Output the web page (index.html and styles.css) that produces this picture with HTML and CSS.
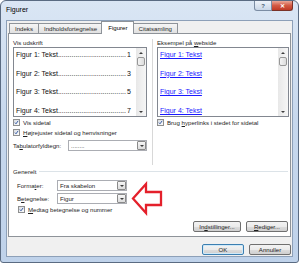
FILE: index.html
```html
<!DOCTYPE html>
<html lang="da">
<head>
  <meta charset="UTF-8" />
  <title>Figurer</title>
  <link rel="stylesheet" href="styles.css">
</head>
<body>
  <div class="window">
    <div class="titlebar">
      <span class="title">Figurer</span>
      <div class="caption">
        <span class="cap help">?</span>
        <span class="cap close">✕</span>
      </div>
    </div>

    <div class="client">
      <div class="tabs">
        <span class="tab">Indeks</span>
        <span class="tab">Indholdsfortegnelse</span>
        <span class="tab active">Figurer</span>
        <span class="tab">Citatsamling</span>
      </div>

      <div class="panel">
        <div class="top">
          <div class="col">
            <div class="label">Vis udskrift</div>
            <div class="listbox">
              <div class="entries">
                <div class="entry"><span>Figur 1: Tekst</span><span class="dots"></span><span class="num">1</span></div>
                <div class="entry"><span>Figur 2: Tekst</span><span class="dots"></span><span class="num">3</span></div>
                <div class="entry"><span>Figur 3: Tekst</span><span class="dots"></span><span class="num">5</span></div>
                <div class="entry"><span>Figur 4: Tekst</span><span class="dots"></span><span class="num">7</span></div>
              </div>
              <div class="scrollbar">
                <span class="sb-btn"><i class="up"></i></span>
                <span class="thumb"></span>
                <span class="sb-track"></span>
                <span class="sb-btn"><i class="down"></i></span>
              </div>
            </div>
            <div class="check"><span class="box"><svg viewBox="0 0 7 7"><path d="M1.3 3.6 L2.8 5.3 L5.8 1.2" /></svg></span>Vis sidetal</div>
            <div class="check"><span class="box"><svg viewBox="0 0 7 7"><path d="M1.3 3.6 L2.8 5.3 L5.8 1.2" /></svg></span><span><u>H</u>øjrejuster sidetal og henvisninger</span></div>
            <div class="field">
              <span class="field-label">Ta<u>b</u>ulatorfyldtegn:</span>
              <div class="combo wide">........<span class="drop"><i class="down"></i></span></div>
            </div>
          </div>

          <div class="col right">
            <div class="label">Eksempel på <u>w</u>ebside</div>
            <div class="listbox">
              <div class="entries">
                <div class="entry link">Figur 1: Tekst</div>
                <div class="entry link">Figur 2: Tekst</div>
                <div class="entry link">Figur 3: Tekst</div>
                <div class="entry link">Figur 4: Tekst</div>
              </div>
              <div class="scrollbar">
                <span class="sb-btn"><i class="up"></i></span>
                <span class="thumb"></span>
                <span class="sb-track"></span>
                <span class="sb-btn"><i class="down"></i></span>
              </div>
            </div>
            <div class="check"><span class="box"><svg viewBox="0 0 7 7"><path d="M1.3 3.6 L2.8 5.3 L5.8 1.2" /></svg></span><span>Brug <u>h</u>yperlinks i stedet for sidetal</span></div>
          </div>
        </div>

        <div class="group">Generelt</div>
        <div class="row">
          <span class="row-label">Forma<u>t</u>er:</span>
          <div class="combo">Fra skabelon<span class="drop"><i class="down"></i></span></div>
        </div>
        <div class="row">
          <span class="row-label">B<u>e</u>tegnelse:</span>
          <div class="combo">Figur<span class="drop"><i class="down"></i></span></div>
        </div>
        <div class="check indent"><span class="box"><svg viewBox="0 0 7 7"><path d="M1.3 3.6 L2.8 5.3 L5.8 1.2" /></svg></span><span><u>M</u>edtag betegnelse og nummer</span></div>

        <div class="buttons">
          <button class="btn wide">In<u>d</u>stillinger...</button>
          <button class="btn"><u>R</u>ediger...</button>
        </div>

        <svg class="arrow" viewBox="0 0 34 35" width="34" height="35">
          <polygon points="3,17.5 16,3 16,11 31,11 31,24 16,24 16,32" />
        </svg>
      </div>

      <div class="footer">
        <button class="btn default">OK</button>
        <button class="btn">Annuller</button>
      </div>
    </div>
  </div>
</body>
</html>
```

FILE: styles.css
```css
* { box-sizing: border-box; }
body {
  margin: 0;
  background: #fff;
  font-family: "Liberation Sans", Arial, sans-serif;
  font-size: 6.1px;
  color: #1e1e1e;
}
u { text-decoration-thickness: 0.5px; text-underline-offset: 1px; }

/* window frame */
.window {
  width: 299px;
  height: 263px;
  border: 1px solid #5a6b82;
  border-radius: 6px 6px 3px 3px;
  background: linear-gradient(180deg, #dae6f4 0%, #c7d8ed 45%, #bfd2ea 100%);
  padding: 0 5px 5px 5px;
  display: flex;
  flex-direction: column;
}
.titlebar {
  height: 19px;
  display: flex;
  align-items: flex-start;
}
.title {
  font-size: 7px;
  line-height: 17px;
  color: #000;
}
.caption { margin-left: auto; display: flex; }
.cap {
  height: 10px;
  display: flex;
  align-items: center;
  justify-content: center;
  border: 1px solid #7b8ca3;
  border-top: none;
  font-weight: bold;
  font-size: 6px;
}
.help {
  width: 18px;
  border-radius: 0 0 0 3px;
  background: linear-gradient(#eef3fa, #c9d6e7);
  color: #4a5a73;
}
.close {
  width: 21px;
  border-left: none;
  border-color: #7a3228;
  border-radius: 0 0 3px 0;
  background: linear-gradient(#eaa797, #d35a44 50%, #c03a25);
  color: #fff;
}

.client {
  flex: 1;
  background: #f0f0f0;
  border: 1px solid #8da0b8;
  padding: 0 1px 0 1px;
  display: flex;
  flex-direction: column;
}

/* tabs */
.tabs {
  height: 12px;
  display: flex;
  align-items: flex-end;
  padding-left: 1px;
}
.tab {
  height: 10px;
  line-height: 9px;
  padding: 0 5px;
  margin-left: -1px;
  border: 1px solid #8e9399;
  border-bottom: none;
  background: linear-gradient(#f5f5f5, #e1e1e1);
  color: #2a2a2a;
}
.tab:first-child { margin-left: 0; }
.tab.active {
  height: 13px;
  line-height: 11px;
  margin: 0 -1px -1px -2px;
  padding: 0 6px;
  background: #fff;
  position: relative;
  z-index: 1;
  color: #000;
}

/* panel */
.panel {
  position: relative;
  background: #fff;
  border: 1px solid #8e9399;
  padding: 5px 1px 4px 4px;
}
.top {
  display: grid;
  grid-template-columns: 134px 1fr;
  column-gap: 5px;
}
.col { padding-bottom: 14px; }
.col.right {
  border-left: 1px solid #d8d8d8;
  padding-left: 4px;
}
.label { line-height: 8px; }

.listbox {
  height: 70px;
  border: 1px solid #828790;
  background: #fff;
  display: flex;
  overflow: hidden;
}
.entries {
  flex: 1;
  padding: 3px 5px 0 2px;
  min-width: 0;
}
.entry {
  display: flex;
  height: 18.7px;
  font-size: 7px;
  line-height: 8px;
  color: #111;
  white-space: nowrap;
}
.entry.link {
  color: #1a1aff;
  text-decoration: underline;
  text-decoration-thickness: 0.6px;
}
.dots {
  flex: 1;
  overflow: hidden;
}
.dots::after { content: "................................................................"; }
.num { margin-left: 1px; }

.scrollbar {
  width: 10px;
  display: flex;
  flex-direction: column;
  align-items: center;
  background: linear-gradient(90deg, #e8e8e8, #f6f6f6);
}
.sb-btn {
  height: 9px;
  display: flex;
  align-items: center;
  justify-content: center;
}
.sb-track { flex: 1; }
.thumb {
  width: 8px;
  height: 9px;
  border: 1px solid #979797;
  border-radius: 2px;
  background: linear-gradient(90deg, #f4f4f4, #dcdcdc);
}
.up, .down {
  display: block;
  border-left: 2px solid transparent;
  border-right: 2px solid transparent;
}
.up { border-bottom: 2px solid #3c3c3c; }
.down { border-top: 2px solid #3c3c3c; }

/* checkboxes */
.check {
  display: flex;
  align-items: center;
  gap: 3px;
  height: 10px;
  white-space: nowrap;
}
.check.indent { padding-left: 5px; }
.box {
  width: 7px;
  height: 7px;
  border: 1px solid #8e8f8f;
  background: linear-gradient(135deg, #d9dce0, #fdfdfd);
  display: flex;
}
.box svg { width: 5px; height: 5px; }
.box path {
  fill: none;
  stroke: #2b52a0;
  stroke-width: 1.3;
}

/* combos */
.field {
  display: flex;
  align-items: center;
  margin-top: 3px;
}
.field-label { width: 55px; }
.combo {
  width: 70px;
  height: 11px;
  border: 1px solid #abadb3;
  background: #fff;
  display: flex;
  align-items: center;
  padding-left: 2px;
  white-space: nowrap;
}
.combo.wide { width: 79px; }
.drop {
  margin-left: auto;
  width: 9px;
  height: 9px;
  border: 1px solid #8a8a8a;
  border-radius: 1px;
  background: linear-gradient(#f6f6f6, #dcdcdc);
  display: flex;
  align-items: center;
  justify-content: center;
}

.group {
  display: flex;
  align-items: center;
  height: 12px;
}
.group::after {
  content: "";
  flex: 1;
  border-top: 1px solid #dce3e8;
  margin: 0 1px 0 3px;
}
.row {
  display: flex;
  align-items: center;
  padding-left: 4px;
  margin-top: 3px;
}
.row + .row { margin-top: 2px; }
.row-label { width: 40px; }

/* buttons */
.buttons, .footer {
  display: flex;
  justify-content: flex-end;
  gap: 5px;
}
.buttons { margin-top: 7px; padding-right: 1px; }
.footer { margin-top: 7px; }
.btn {
  width: 42px;
  height: 11px;
  padding: 0;
  font: inherit;
  color: #1e1e1e;
  border: 1px solid #707070;
  border-radius: 2px;
  background: linear-gradient(#f3f3f3 0%, #ebebeb 50%, #dddddd 51%, #cfcfcf 100%);
}
.btn.wide { width: 48px; }
.btn.default {
  border-color: #3c7fb1;
  box-shadow: inset 0 0 0 1px #cfe9f8;
}

/* red annotation arrow */
.arrow {
  position: absolute;
  left: 121px;
  top: 147px;
}
.arrow polygon {
  fill: none;
  stroke: #e4202b;
  stroke-width: 2.3;
  stroke-linejoin: miter;
}
```
